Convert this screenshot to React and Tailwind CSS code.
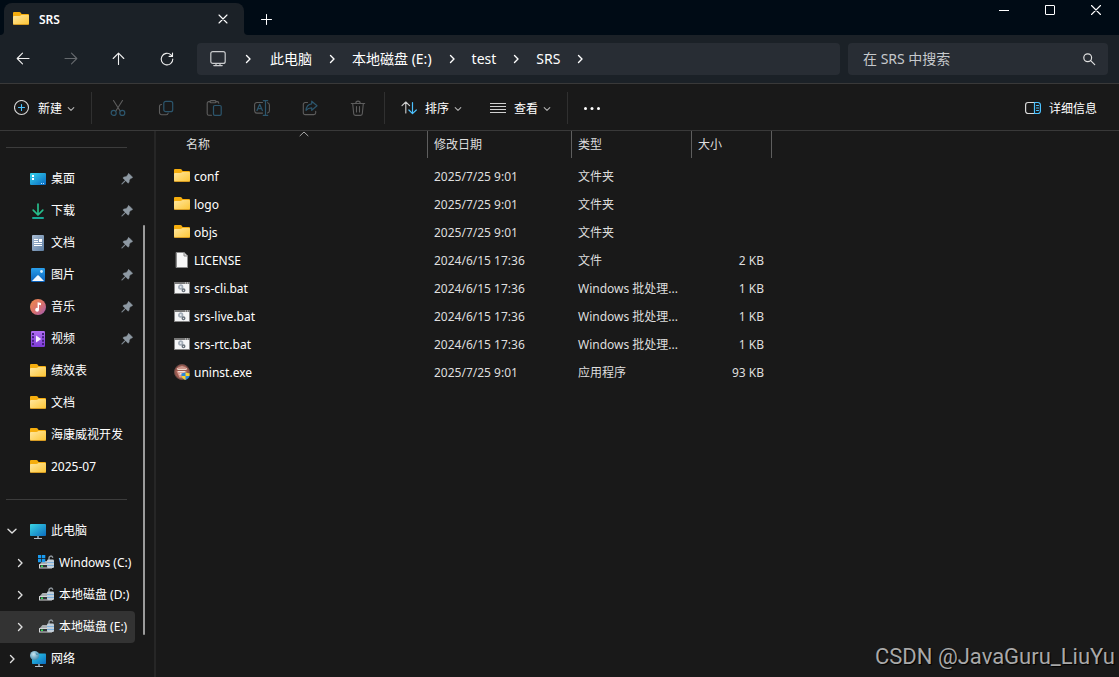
import React from "react";

/* ---------- small drawings ---------- */

function Svg({ w = 16, h = 16, children, className = "" }) {
  return (
    <svg
      width={w}
      height={h}
      viewBox={`0 0 ${w} ${h}`}
      fill="none"
      strokeLinecap="round"
      strokeLinejoin="round"
      className={"shrink-0 " + className}
      aria-hidden="true"
    >
      {children}
    </svg>
  );
}

function FolderIcon() {
  return (
    <Svg>
      <defs>
        <linearGradient id="folderFront" x1="0" y1="0" x2="1" y2="1">
          <stop offset="0" stopColor="#ffe7a0" />
          <stop offset="1" stopColor="#fcc534" />
        </linearGradient>
      </defs>
      <path d="M0 2A1 1 0 0 1 1 1h5.500c.5 0 .8.2 1.100.5L8.600 3H15a1 1 0 0 1 1 1v4H0z" fill="#f5ad0d" />
      <path d="M0 6A1 1 0 0 1 1 5h5.400c.6 0 .9-.2 1.300-.5L8.500 4H15a1 1 0 0 1 1 1v7.800a1 1 0 0 1-1 1H1a1 1 0 0 1-1-1z" fill="url(#folderFront)" />
      <path d="M.4 13.200c.2.2.4.3.7.3h13.800c.3 0 .5-.1.7-.3" stroke="#dc9a1c" strokeWidth=".8" />
    </Svg>
  );
}

function DesktopIcon() {
  return (
    <Svg>
      <defs>
        <linearGradient id="desk" x1="0" y1="0" x2="1" y2="1">
          <stop offset="0" stopColor="#36d3ea" />
          <stop offset="1" stopColor="#0868c4" />
        </linearGradient>
      </defs>
      <rect x="0" y="2" width="16" height="12" rx="1" fill="url(#desk)" />
      <path d="M2 4h2v2H2zM2 7h2v2H2z" fill="#fff" />
      <path d="M11 12h1v1h-1zM13 12h1v1h-1z" fill="#bfe3ff" />
    </Svg>
  );
}

function DownloadIcon() {
  return (
    <Svg>
      <defs>
        <linearGradient id="down" x1="0" y1="0" x2="0" y2="16" gradientUnits="userSpaceOnUse">
          <stop offset="0" stopColor="#2cc48a" />
          <stop offset="1" stopColor="#16a596" />
        </linearGradient>
      </defs>
      <path d="M8 1v10.600M3.200 7.200L8 12l4.800-4.800" stroke="#27bd8c" strokeWidth="1.700" />
      <rect x="2" y="14" width="12" height="2" rx="1" fill="url(#down)" />
    </Svg>
  );
}

function DocIcon() {
  return (
    <Svg>
      <defs>
        <linearGradient id="doc" x1="0" y1="0" x2="1" y2="1">
          <stop offset="0" stopColor="#a9bdd4" />
          <stop offset="1" stopColor="#5f7fa3" />
        </linearGradient>
      </defs>
      <rect x="2" y="0" width="12" height="16" rx="1" fill="url(#doc)" />
      <path d="M4 4.500h4M4 6.500h4M4 8.500h8M4 10.500h8" stroke="#fff" strokeWidth="1" strokeLinecap="butt" />
      <rect x="9" y="4" width="3" height="3" fill="#fff" />
    </Svg>
  );
}

function PictureIcon() {
  return (
    <Svg>
      <defs>
        <linearGradient id="pic" x1="0" y1="0" x2="0" y2="1">
          <stop offset="0" stopColor="#2aa0ec" />
          <stop offset="1" stopColor="#0a5fb8" />
        </linearGradient>
      </defs>
      <rect x="1" y="1" width="14" height="14" rx="1.200" fill="url(#pic)" />
      <path d="M2 14l5.300-5.500a1 1 0 0 1 1.400 0L14 14z" fill="#f3f9ff" />
      <circle cx="11.500" cy="4.500" r="1.400" fill="#d7efff" />
    </Svg>
  );
}

function MusicIcon() {
  return (
    <Svg>
      <defs>
        <linearGradient id="mus" x1="0" y1="0" x2="1" y2="1">
          <stop offset="0" stopColor="#f08c4a" />
          <stop offset=".55" stopColor="#d8706f" />
          <stop offset="1" stopColor="#9a59b8" />
        </linearGradient>
      </defs>
      <circle cx="8" cy="8" r="8" fill="url(#mus)" />
      <path d="M7.600 3.200l3.400.9v2.100l-2-.5v5a1.900 1.900 0 1 1-1.400-1.800z" fill="#fff" />
    </Svg>
  );
}

function VideoIcon() {
  return (
    <Svg>
      <defs>
        <linearGradient id="vid" x1="0" y1="0" x2="0" y2="1">
          <stop offset="0" stopColor="#b06cf2" />
          <stop offset="1" stopColor="#7c3bd6" />
        </linearGradient>
      </defs>
      <rect x="1" y="0" width="14" height="16" rx="1.200" fill="url(#vid)" />
      <path d="M2 2h2v2H2zM2 5.300h2v2H2zM2 8.700h2v2H2zM2 12h2v2H2zM12 2h2v2h-2zM12 5.300h2v2h-2zM12 8.700h2v2h-2zM12 12h2v2h-2z" fill="#43207f" />
      <path d="M6 4.600v6.800L11.200 8z" fill="#f4ecff" />
    </Svg>
  );
}

function PcIcon() {
  return (
    <Svg>
      <defs>
        <linearGradient id="pcs" x1="0" y1="0" x2="1" y2="1">
          <stop offset="0" stopColor="#3ad6e4" />
          <stop offset="1" stopColor="#0b6cc0" />
        </linearGradient>
      </defs>
      <rect x="0" y="1" width="16" height="12" rx=".8" fill="url(#pcs)" />
      <path d="M7 13h2v2H7z" fill="#7d8b97" />
      <path d="M4 15h8v1H4z" fill="#b3bec8" />
    </Svg>
  );
}

function NetworkIcon() {
  return (
    <Svg>
      <defs>
        <linearGradient id="nets" x1="0" y1="0" x2="1" y2="1">
          <stop offset="0" stopColor="#2fd0ea" />
          <stop offset="1" stopColor="#0b6cc0" />
        </linearGradient>
        <radialGradient id="globe" cx=".4" cy=".35" r=".7">
          <stop offset="0" stopColor="#c9e6f0" />
          <stop offset="1" stopColor="#3b86ab" />
        </radialGradient>
      </defs>
      <rect x="2" y="2.500" width="14" height="10.500" rx=".8" fill="url(#nets)" />
      <path d="M8 13h2v2H8z" fill="#7d8b97" />
      <path d="M5 15h8v1H5z" fill="#b3bec8" />
      <circle cx="4.600" cy="4.600" r="4.600" fill="url(#globe)" />
      <path d="M5.500 1.200c.8 1.600 1.600.8 2.600 2.200-1 1.500-2.300.6-2.600-2.200z" fill="#4a8fb2" />
    </Svg>
  );
}

function DriveIcon({ system }) {
  return (
    <Svg>
      <path d="M4.500 6H11v4H1z" fill="#a9adb1" />
      <rect x="1" y="9" width="13" height="4.500" rx=".6" fill="#d4d6d8" />
      <rect x="2" y="10" width="8" height="2.500" fill="#2f3336" />
      <rect x="3" y="10.500" width="2" height="1.500" fill="#35e05a" />
      {system && <path d="M0 0h3.300v3.300H0zM4 0h3.300v3.300H4zM0 4h3.300v3.300H0zM4 4h3.300v3.300H4z" fill="#1a9bf0" />}
      <path d="M11 5V2.800a1.900 1.900 0 0 1 3.600-.6" stroke="#8f969c" strokeWidth="1.500" />
      <rect x="9" y="4.500" width="7" height="8.500" rx="1.200" fill="#c3cfd9" />
      <path d="M9 7.500h7M9 10.500h7" stroke="#7eb0dc" strokeWidth="1" strokeLinecap="butt" />
    </Svg>
  );
}

function PinIcon() {
  return (
    <Svg w={12} h={12}>
      <path d="M7.200.7c.3-.3.600-.3.900 0l3.200 3.200c.3.3.3.600 0 .9L10 5.300 8.300 7l-.2 2.300-1 .9L4.600 7.800 1.300 11 .7 11.200l.3-.7 3.200-3.200-2.300-2.400 1-.9L5 3.700 6.700 2z" fill="#8e99a3" stroke="#8e99a3" strokeWidth=".5" />
    </Svg>
  );
}

function FileIcon() {
  return (
    <Svg>
      <path d="M2.500.5h7.500l3.500 3.500v11.500h-11z" fill="#f7f7f7" stroke="#8b8b8b" strokeWidth="1" />
      <path d="M10 .5V4h3.500" stroke="#8b8b8b" fill="#dcdcdc" strokeWidth="1" />
    </Svg>
  );
}

function BatIcon() {
  return (
    <Svg>
      <rect x=".5" y="2.500" width="15" height="11" fill="#f5f6f7" stroke="#858585" />
      <path d="M0 2h16v2H0z" fill="#777" />
      <path d="M11 2.500h1v1h-1zM13 2.500h1v1h-1z" fill="#ddd" />
      <circle cx="6.700" cy="7" r="1.800" fill="#e6ebef" stroke="#a3adb8" strokeWidth="1.700" />
      <circle cx="9.500" cy="10.300" r="1.300" fill="#f0f2f3" stroke="#6b747d" strokeWidth="1.400" />
    </Svg>
  );
}

function ExeIcon() {
  return (
    <Svg>
      <circle cx="8" cy="8" r="7.500" fill="#9b5a50" stroke="#6b4a46" />
      <path d="M2.800 4.800a6 4.500 0 0 1 10.400 0l-1 1.200H3.800z" fill="#f0d9cb" />
      <path d="M4.500 4h7" stroke="#a9524a" strokeWidth="1.200" />
      <path d="M2.500 7h10l-2 6.500h-5z" fill="#d79a90" />
      <path d="M4.500 7.600h6M6 10.500c.6-1.300 1.600-1.300 2.400 0" stroke="#f3e2d8" strokeWidth="1.100" />
      <path d="M11.500 8.300c1.400.9 2.500 1 4 1v2.700c0 1.800-2 3.200-4 4-2-.8-4-2.200-4-4V9.300c1.500 0 2.600-.1 4-1z" fill="#2a86dc" />
      <path d="M11.500 8.300c1.400.9 2.500 1 4 1V12h-4zM7.500 12h4v4c-2-.8-4-2.200-4-4z" fill="#fbd02c" />
    </Svg>
  );
}

function Chevron({ dir = "right", className = "" }) {
  const paths = {
    right: "M6.500 4.500L10 8l-3.500 3.500",
    down: "M4 6.200L8 10l4-3.800",
  };
  return (
    <Svg className={className}>
      <path d={paths[dir]} stroke="currentColor" strokeWidth="1.400" />
    </Svg>
  );
}

function SmallDown() {
  return (
    <Svg w={8} h={8}>
      <path d="M1.200 2.700L4 5.400l2.800-2.700" stroke="#b4b4b4" strokeWidth="1.100" />
    </Svg>
  );
}

/* ---------- data ---------- */

const pinned = [
  { label: "桌面", icon: <DesktopIcon />, pin: true },
  { label: "下载", icon: <DownloadIcon />, pin: true },
  { label: "文档", icon: <DocIcon />, pin: true },
  { label: "图片", icon: <PictureIcon />, pin: true },
  { label: "音乐", icon: <MusicIcon />, pin: true },
  { label: "视频", icon: <VideoIcon />, pin: true },
  { label: "绩效表", icon: <FolderIcon /> },
  { label: "文档", icon: <FolderIcon /> },
  { label: "海康威视开发", icon: <FolderIcon /> },
  { label: "2025-07", icon: <FolderIcon /> },
];

const tree = [
  { label: "此电脑", icon: <PcIcon />, open: true },
  { label: "Windows (C:)", icon: <DriveIcon system />, child: true },
  { label: "本地磁盘 (D:)", icon: <DriveIcon />, child: true },
  { label: "本地磁盘 (E:)", icon: <DriveIcon />, child: true, active: true },
  { label: "网络", icon: <NetworkIcon /> },
];

const files = [
  { name: "conf", icon: <FolderIcon />, date: "2025/7/25 9:01", type: "文件夹", size: "" },
  { name: "logo", icon: <FolderIcon />, date: "2025/7/25 9:01", type: "文件夹", size: "" },
  { name: "objs", icon: <FolderIcon />, date: "2025/7/25 9:01", type: "文件夹", size: "" },
  { name: "LICENSE", icon: <FileIcon />, date: "2024/6/15 17:36", type: "文件", size: "2 KB" },
  { name: "srs-cli.bat", icon: <BatIcon />, date: "2024/6/15 17:36", type: "Windows 批处理...", size: "1 KB" },
  { name: "srs-live.bat", icon: <BatIcon />, date: "2024/6/15 17:36", type: "Windows 批处理...", size: "1 KB" },
  { name: "srs-rtc.bat", icon: <BatIcon />, date: "2024/6/15 17:36", type: "Windows 批处理...", size: "1 KB" },
  { name: "uninst.exe", icon: <ExeIcon />, date: "2025/7/25 9:01", type: "应用程序", size: "93 KB" },
];

const crumbs = ["此电脑", "本地磁盘 (E:)", "test", "SRS"];

/* ---------- sections ---------- */

function TitleBar() {
  const ctl = "flex h-5 w-[46px] items-center justify-center";
  return (
    <header className="flex h-[35px] items-start bg-[#000b15]">
      <div className="relative mt-[3px] ml-1 flex h-8 w-60 items-center rounded-t-lg bg-[#1b2127] pl-[9px]">
        <span className="absolute bottom-0 -left-1 size-1 bg-[#1b2127]">
          <span className="block size-1 rounded-br bg-[#000b15]" />
        </span>
        <span className="absolute -right-1 bottom-0 size-1 bg-[#1b2127]">
          <span className="block size-1 rounded-bl bg-[#000b15]" />
        </span>
        <FolderIcon />
        <span className="ml-2.5 pt-0.5 text-xs leading-4 font-semibold text-white">SRS</span>
        <button aria-label="关闭标签页" className="mr-[13px] ml-auto flex size-4 items-center justify-center">
          <Svg w={10} h={10}>
            <path d="M1 1l8 8M9 1L1 9" stroke="#fff" strokeWidth="1.100" />
          </Svg>
        </button>
      </div>
      <button aria-label="新建标签页" className="mt-[11px] ml-3.5 flex size-4 items-center justify-center">
        <Svg w={12} h={12}>
          <path d="M6.500 1.500v10M1.500 6.500h10" stroke="#fff" strokeWidth="1" />
        </Svg>
      </button>
      <div className="ml-auto flex">
        <button aria-label="最小化" className={ctl}>
          <Svg w={10} h={10}><path d="M0 5.500h10" stroke="#fff" strokeLinecap="butt" /></Svg>
        </button>
        <button aria-label="最大化" className={ctl}>
          <Svg w={10} h={10}><rect x=".5" y=".5" width="9" height="9" rx=".5" stroke="#fff" /></Svg>
        </button>
        <button aria-label="关闭" className={ctl}>
          <Svg w={10} h={10}><path d="M.5.5l9 9M9.500.5l-9 9" stroke="#fff" strokeWidth="1.100" /></Svg>
        </button>
      </div>
    </header>
  );
}

function NavBar() {
  const btn = "flex size-8 items-center justify-center";
  return (
    <nav className="flex h-12 items-center bg-[#1b2127] pr-[11px] pl-[7px]">
      <div className="flex gap-4">
        <button aria-label="后退" className={btn}>
          <Svg><path d="M14 7.500H2.500M7.500 2.200L2.200 7.500l5.300 5.300" stroke="#f0f0f0" strokeWidth="1.100" /></Svg>
        </button>
        <button aria-label="前进" className={btn} disabled>
          <Svg><path d="M2 7.500h11.500M8.500 2.200l5.300 5.300-5.300 5.300" stroke="#65696d" strokeWidth="1.100" /></Svg>
        </button>
        <button aria-label="向上" className={btn}>
          <Svg><path d="M7.500 13.500V2.500M2.200 7.500l5.300-5.300 5.300 5.300" stroke="#f0f0f0" strokeWidth="1.100" /></Svg>
        </button>
        <button aria-label="刷新" className={btn}>
          <Svg>
            <path d="M13.800 8A5.800 5.800 0 1 1 11.900 3.800L13.500 5.200M13.500 2v3.400h-3.400" stroke="#f0f0f0" strokeWidth="1.100" />
          </Svg>
        </button>
      </div>
      <div className="ml-3.5 flex h-8 min-w-0 flex-1 items-center gap-3 rounded bg-[#282d34] pl-[13px] text-sm leading-5 text-white">
        <Svg className="mr-0.5">
          <rect x=".8" y=".6" width="14.400" height="11.800" rx="2" stroke="#c9cbcd" strokeWidth="1.200" />
          <path d="M6 12.500v2M10 12.500v2M3.800 14.600h8.400" stroke="#c9cbcd" strokeWidth="1.200" />
        </Svg>
        <Chevron className="mr-0.5" />
        {crumbs.map((c) => (
          <React.Fragment key={c}>
            <button className="whitespace-nowrap">{c}</button>
            <Chevron />
          </React.Fragment>
        ))}
      </div>
      <label className="ml-2 flex h-8 w-[260px] items-center rounded bg-[#282d34] pr-3 pl-[15px]">
        <input
          type="search"
          aria-label="搜索"
          placeholder="在 SRS 中搜索"
          className="min-w-0 flex-1 bg-transparent text-sm leading-5 text-white outline-none placeholder:text-[#c6c9cc]"
        />
        <Svg w={14} h={14}>
          <circle cx="5.700" cy="5.700" r="3.900" stroke="#e0e0e0" strokeWidth="1.200" />
          <path d="M8.700 8.700l4 4" stroke="#e0e0e0" strokeWidth="1.200" />
        </Svg>
      </label>
    </nav>
  );
}

function ToolBar() {
  const btn = "flex size-8 items-center justify-center";
  const sep = "h-8 w-px bg-[#303030]";
  const text = "flex h-8 items-center gap-2 text-xs leading-4 whitespace-nowrap text-white";
  const label = "flex items-center gap-[5px] pt-0.5";
  const grey = "#5d5d5d";
  const blue = "#2c566d";
  return (
    <div role="toolbar" className="flex h-12 items-center border-y border-[#393939] bg-[#191919] pt-0.5">
      <button className={text + " ml-3.5"}>
        <Svg>
          <circle cx="7.500" cy="7.500" r="7" stroke="#d8d8d8" strokeWidth="1.100" />
          <path d="M7.500 4.500v6M4.500 7.500h6" stroke="#4cc2ff" strokeWidth="1.100" />
        </Svg>
        <span className={label}>新建<SmallDown /></span>
      </button>
      <span className={sep + " mr-2.5 ml-4"} />
      <div className="flex gap-4">
        <button aria-label="剪切" disabled className={btn}>
          <Svg>
            <path d="M3.500.5l6.800 10.800M12.500.5L5.700 11.300" stroke={grey} strokeWidth="1.100" />
            <circle cx="3.700" cy="12.900" r="2.500" stroke={blue} strokeWidth="1.200" />
            <circle cx="12.300" cy="12.900" r="2.500" stroke={blue} strokeWidth="1.200" />
          </Svg>
        </button>
        <button aria-label="复制" disabled className={btn}>
          <Svg>
            <path d="M3.500 4.500A2 2 0 0 0 1.500 6.500v6a2.200 2.200 0 0 0 2.200 2.200h4.500a2 2 0 0 0 2-1.700" stroke={grey} strokeWidth="1.100" />
            <rect x="5.800" y="1.300" width="8.900" height="10.400" rx="2" stroke={blue} strokeWidth="1.200" />
          </Svg>
        </button>
        <button aria-label="粘贴" disabled className={btn}>
          <Svg>
            <path d="M5.500 15.300H2.800a1.600 1.600 0 0 1-1.600-1.600V3.200a1.600 1.600 0 0 1 1.600-1.600H4M10 1.600h1.200a1.600 1.600 0 0 1 1.600 1.600" stroke={grey} strokeWidth="1.100" />
            <rect x="4" y=".6" width="6" height="2.200" rx="1" stroke={grey} strokeWidth="1.100" />
            <rect x="7.500" y="5.500" width="7.700" height="9.900" rx="1.300" stroke={blue} strokeWidth="1.200" />
          </Svg>
        </button>
        <button aria-label="重命名" disabled className={btn}>
          <Svg>
            <path d="M8.500 2.500h-5.600A2.300 2.300 0 0 0 .6 4.800v6a2.300 2.300 0 0 0 2.300 2.300h5.600M13.500 2.700a2.300 2.300 0 0 1 1.900 2.200v5.900a2.300 2.300 0 0 1-1.900 2.200" stroke={grey} strokeWidth="1.100" />
            <path d="M3 10.500l2.700-6.200 2.700 6.200M3.900 8.600h3.600" stroke={blue} strokeWidth="1.300" />
            <path d="M11.500.8v14.400M9.300.6h4.400M9.300 15.400h4.400" stroke={blue} strokeWidth="1.200" />
          </Svg>
        </button>
        <button aria-label="共享" disabled className={btn}>
          <Svg>
            <path d="M5.500 2.500H3.200A1.900 1.900 0 0 0 1.300 4.400v8.300a1.900 1.900 0 0 0 1.900 1.900h8.600a1.900 1.900 0 0 0 1.900-1.900v-1.500" stroke={grey} strokeWidth="1.100" />
            <path d="M9.700 1.200l5.300 4.600-5.300 4.500V7.800c-2.600 0-4.300.8-5.700 2.600.3-3.400 2.200-6.200 5.700-6.600z" stroke={blue} strokeWidth="1.200" />
          </Svg>
        </button>
        <button aria-label="删除" disabled className={btn}>
          <Svg>
            <path d="M1.300 3.500h13.400M5.800 3.300a2.200 2.200 0 0 1 4.400 0M2.700 3.700l1 10.100a1.700 1.700 0 0 0 1.700 1.600h5.200a1.700 1.700 0 0 0 1.700-1.600l1-10.100M6.500 6.500v5.500M9.500 6.500v5.500" stroke={grey} strokeWidth="1.100" />
          </Svg>
        </button>
      </div>
      <span className={sep + " mr-4 ml-2.5"} />
      <button className={text}>
        <Svg>
          <path d="M4.800 13V2M1 5.700L4.800 2l3.800 3.700" stroke="#cfcfcf" strokeWidth="1.100" />
          <path d="M11.500 2.500v11M7.900 10l3.600 3.600 3.800-3.600" stroke="#4cc2ff" strokeWidth="1.200" />
        </Svg>
        <span className={label}>排序<SmallDown /></span>
      </button>
      <button className={text + " ml-7"}>
        <Svg>
          <path d="M0 3.500h16M0 6.500h16M0 9.500h16M0 12.500h16" stroke="#d0d0d0" strokeLinecap="butt" />
        </Svg>
        <span className={label}>查看<SmallDown /></span>
      </button>
      <span className={sep + " mr-2 ml-4"} />
      <button aria-label="更多" className={btn}>
        <Svg>
          <circle cx="1.500" cy="8.500" r="1.500" fill="#fff" />
          <circle cx="8" cy="8.500" r="1.500" fill="#fff" />
          <circle cx="14.500" cy="8.500" r="1.500" fill="#fff" />
        </Svg>
      </button>
      <button className={text + " mr-[22px] ml-auto"}>
        <Svg>
          <path d="M9.500 2.500H3A2.400 2.400 0 0 0 .6 4.900v6.200A2.400 2.400 0 0 0 3 13.500h6.500" stroke="#d8d8d8" strokeWidth="1.200" />
          <path d="M9.500 2.500H13a2.400 2.400 0 0 1 2.400 2.400v6.200a2.400 2.400 0 0 1-2.400 2.400H9.500zM11.500 5.500h2M11.500 8h2M11.500 10.500h2" stroke="#4cc2ff" strokeWidth="1.200" />
        </Svg>
        <span className={label}>详细信息</span>
      </button>
    </div>
  );
}

function SideBar() {
  return (
    <aside className="flex w-[156px] shrink-0 border-r-2 border-[#262626]">
      <div className="w-[135px] shrink-0 pt-4 text-xs leading-4 text-white">
        <div className="mr-2 ml-1.5 h-px bg-[#3c3c3c]" />
        <ul className="mt-[15px]">
          {pinned.map((p, i) => (
            <li key={i}>
              <button className="flex h-8 w-full items-center gap-[5px] pr-0.5 pl-[30px] text-left whitespace-nowrap">
                {p.icon}
                <span className="flex-1">{p.label}</span>
                {p.pin && <PinIcon />}
              </button>
            </li>
          ))}
        </ul>
        <div className="mt-4 mr-2 ml-1.5 h-px bg-[#3c3c3c]" />
        <ul className="mt-[15px]">
          {tree.map((t) => (
            <li key={t.label}>
              <button
                className={
                  "flex h-8 w-full items-center gap-[5px] text-left whitespace-nowrap " +
                  (t.child ? "pl-3" : "pl-1") +
                  (t.active ? " rounded-r-sm bg-[#333333]" : "")
                }
              >
                <Chevron dir={t.open ? "down" : "right"} className="mr-[5px] text-[#e0e0e0]" />
                {t.icon}
                <span>{t.label}</span>
              </button>
            </li>
          ))}
        </ul>
      </div>
      <div className="mt-[94px] ml-2 h-[410px] w-0.5 rounded-full bg-[#9b9b9b]" />
    </aside>
  );
}

function HeadCell({ children, first }) {
  return (
    <th className="h-[31px] p-0 text-left align-top font-normal">
      <div
        className={
          "relative flex h-[27px] items-center border-r border-[#5e5e5e] text-[#dedede] " +
          (first ? "pl-[30px]" : "pl-1.5")
        }
      >
        {children}
        {first && (
          <Svg w={10} h={6} className="absolute top-0 left-[143px]">
            <path d="M1 4.800L5 1l4 3.800" stroke="#a8a8a8" />
          </Svg>
        )}
      </div>
    </th>
  );
}

function FileTable() {
  return (
    <main className="min-w-0 flex-1">
      <table className="w-[616px] table-fixed border-separate border-spacing-0 text-xs leading-4 whitespace-nowrap">
        <colgroup>
          <col className="w-[272px]" />
          <col className="w-36" />
          <col className="w-[120px]" />
          <col className="w-20" />
        </colgroup>
        <thead>
          <tr>
            <HeadCell first>名称</HeadCell>
            <HeadCell>修改日期</HeadCell>
            <HeadCell>类型</HeadCell>
            <HeadCell>大小</HeadCell>
          </tr>
        </thead>
        <tbody className="text-[#dedede]">
          {files.map((f) => (
            <tr key={f.name} className="h-7">
              <td className="p-0 pl-[18px] text-white">
                <div className="flex items-center gap-1">
                  {f.icon}
                  <span className="pt-0.5">{f.name}</span>
                </div>
              </td>
              <td className="p-0 pt-0.5 pl-1.5">{f.date}</td>
              <td className="p-0 pt-0.5 pl-1.5">{f.type}</td>
              <td className="p-0 pt-0.5 pr-2 text-right">{f.size}</td>
            </tr>
          ))}
        </tbody>
      </table>
    </main>
  );
}

export default function App() {
  return (
    <div className="relative flex min-h-screen flex-col bg-[#191919] font-['Noto_Sans','Noto_Sans_CJK_SC',sans-serif]">
      <TitleBar />
      <NavBar />
      <ToolBar />
      <div className="flex flex-1">
        <SideBar />
        <FileTable />
      </div>
      <p className="absolute right-1 bottom-1.5 font-['Roboto',sans-serif] text-[22px] leading-7 text-[#a9a9a9] [text-shadow:1px_1px_1px_#000]">
        CSDN @JavaGuru_LiuYu
      </p>
    </div>
  );
}
